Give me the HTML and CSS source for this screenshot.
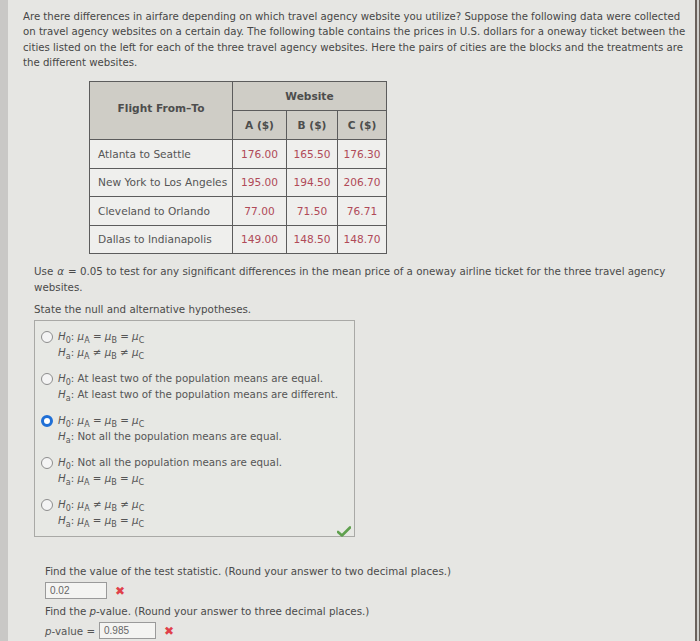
FILE: index.html
```html
<!DOCTYPE html>
<html>
<head>
<meta charset="utf-8">
<link rel="stylesheet" href="styles.css">
</head>
<body>
<div class="frame">
  <div class="page">
    <p class="intro">Are there differences in airfare depending on which travel agency website you utilize? Suppose the following data were collected on travel agency websites on a certain day. The following table contains the prices in U.S. dollars for a oneway ticket between the cities listed on the left for each of the three travel agency websites. Here the pairs of cities are the blocks and the treatments are the different websites.</p>

    <table class="data">
      <tr class="h1">
        <th rowspan="2" class="flight">Flight From–To</th>
        <th colspan="3">Website</th>
      </tr>
      <tr class="h2">
        <th class="ca">A ($)</th><th class="cb">B ($)</th><th class="cc">C ($)</th>
      </tr>
      <tr><td class="city">Atlanta to Seattle</td><td>176.00</td><td>165.50</td><td>176.30</td></tr>
      <tr><td class="city">New York to Los Angeles</td><td>195.00</td><td>194.50</td><td>206.70</td></tr>
      <tr><td class="city">Cleveland to Orlando</td><td>77.00</td><td>71.50</td><td>76.71</td></tr>
      <tr><td class="city">Dallas to Indianapolis</td><td>149.00</td><td>148.50</td><td>148.70</td></tr>
    </table>

    <div class="sub">
      <p class="use"><span class="w">Use</span><span class="alpha">α</span><span class="w">= 0.05 to test for any significant differences in the mean price of a oneway airline ticket for the three travel agency websites.</span></p>
      <p class="state">State the null and alternative hypotheses.</p>

      <div class="answers">
        <div class="opt">
          <span class="radio"></span>
          <div class="lines">
            <div><i class="m">H</i><sub>0</sub>: <i class="m">μ</i><sub>A</sub> = <i class="m">μ</i><sub>B</sub> = <i class="m">μ</i><sub>C</sub></div>
            <div><i class="m">H</i><sub>a</sub>: <i class="m">μ</i><sub>A</sub> ≠ <i class="m">μ</i><sub>B</sub> ≠ <i class="m">μ</i><sub>C</sub></div>
          </div>
        </div>
        <div class="opt">
          <span class="radio"></span>
          <div class="lines">
            <div><i class="m">H</i><sub>0</sub>: At least two of the population means are equal.</div>
            <div><i class="m">H</i><sub>a</sub>: At least two of the population means are different.</div>
          </div>
        </div>
        <div class="opt">
          <span class="radio on"></span>
          <div class="lines">
            <div><i class="m">H</i><sub>0</sub>: <i class="m">μ</i><sub>A</sub> = <i class="m">μ</i><sub>B</sub> = <i class="m">μ</i><sub>C</sub></div>
            <div><i class="m">H</i><sub>a</sub>: Not all the population means are equal.</div>
          </div>
        </div>
        <div class="opt">
          <span class="radio"></span>
          <div class="lines">
            <div><i class="m">H</i><sub>0</sub>: Not all the population means are equal.</div>
            <div><i class="m">H</i><sub>a</sub>: <i class="m">μ</i><sub>A</sub> = <i class="m">μ</i><sub>B</sub> = <i class="m">μ</i><sub>C</sub></div>
          </div>
        </div>
        <div class="opt">
          <span class="radio"></span>
          <div class="lines">
            <div><i class="m">H</i><sub>0</sub>: <i class="m">μ</i><sub>A</sub> ≠ <i class="m">μ</i><sub>B</sub> ≠ <i class="m">μ</i><sub>C</sub></div>
            <div><i class="m">H</i><sub>a</sub>: <i class="m">μ</i><sub>A</sub> = <i class="m">μ</i><sub>B</sub> = <i class="m">μ</i><sub>C</sub></div>
          </div>
        </div>
        <svg class="check" width="14" height="11" viewBox="0 0 14 11"><path d="M1 6 L5 9.5 L13 1.5" fill="none" stroke="#5fa04e" stroke-width="2.6" stroke-linecap="round" stroke-linejoin="round"/></svg>
      </div>

      <div class="lower">
        <p class="q">Find the value of the test statistic. (Round your answer to two decimal places.)</p>
        <div class="ansrow">
          <span class="box b1">0.02</span>
          <span class="x">✖</span>
        </div>

        <p class="q q2">Find the <i class="m">p</i>-value. (Round your answer to three decimal places.)</p>
        <div class="ansrow">
          <span class="lbl"><i class="m">p</i>-value =</span>
          <span class="box b2">0.985</span>
          <span class="x">✖</span>
        </div>
      </div>
    </div>
  </div>
</div>
</body>
</html>
```

FILE: styles.css
```css
html, body {
  margin: 0;
  padding: 0;
}
body {
  width: 700px;
  height: 641px;
  overflow: hidden;
  background: #d9d8d5;
  font-family: "DejaVu Sans", Verdana, sans-serif;
  color: #4a4a4a;
}
.frame {
  height: 641px;
  border-left: 8px solid #c9c8c6;
  border-right: 5px solid #6b625c;
  background: #e6e6e3;
  display: flex;
}
.page {
  flex: 1;
  padding: 9px 10px 0 15px;
  border-right: 2px solid #cfcecb;
  margin-right: 10px;
}
.intro {
  margin: 0;
  font-family: "DejaVu Sans Condensed", "DejaVu Sans", sans-serif;
  font-stretch: semi-condensed;
  font-size: 11.3px;
  line-height: 15.3px;
  color: #464646;
  width: 664px;
}
.data {
  margin: 11px 0 0 66px;
  border-collapse: collapse;
  font-size: 10.6px;
}
.data th, .data td {
  border: 1.5px solid #5c5c5c;
  padding: 0;
}
.data th {
  background: #cfcdc6;
  color: #4d4d4d;
  font-weight: bold;
  height: 28px;
}
.data th.flight {
  width: 142px;
  vertical-align: middle;
  padding-bottom: 6px;
}
.data .h2 th { height: 28px; }
.data th.ca { width: 53px; }
.data th.cb { width: 50px; }
.data th.cc { width: 48px; }
.data td {
  background: #efefed;
  height: 27.5px;
  text-align: center;
  color: #b04a58;
}
.data td.city {
  text-align: left;
  padding-left: 8px;
  color: #555;
}
.sub {
  padding-left: 11px;
}
.use {
  margin: 10px 0 0 0;
  font-size: 10.3px;
  line-height: 15.5px;
  color: #4a4a4a;
  width: 645px;
}
.alpha {
  font-style: oblique;
  margin: 0 4px;
}
.state {
  margin: 8px 0 0 0;
  font-size: 10.3px;
  color: #4a4a4a;
}
.m {
  font-family: "DejaVu Sans", sans-serif;
  font-style: oblique;
}
sub {
  font-size: 8px;
  vertical-align: -3px;
  line-height: 0;
}
.answers {
  position: relative;
  margin-top: 5px;
  width: 321px;
  height: 217px;
  border: 1px solid #a9a9a6;
  background: #e7e8e4;
  box-sizing: border-box;
  padding-top: 9px;
}
.opt {
  display: flex;
  align-items: flex-start;
  margin-left: 6px;
  margin-bottom: 12px;
}
.radio {
  width: 10px;
  height: 10px;
  border: 1px solid #8d8d8d;
  border-radius: 50%;
  background: #f4f4f4;
  margin-top: 1px;
  flex: none;
}
.radio.on {
  width: 6px;
  height: 6px;
  border: 3px solid #1f6fd6;
  background: #fff;
}
.lines {
  margin-left: 5px;
  font-size: 10.3px;
  line-height: 16px;
  color: #555;
}
.opt .lines div:first-child { line-height: 13px; }
.opt .lines div + div { margin-top: 1px; }
.check {
  position: absolute;
  right: 3px;
  bottom: -1px;
}
.lower {
  padding-left: 11px;
}
.q {
  margin: 28px 0 0 0;
  font-size: 10.3px;
  color: #4a4a4a;
}
.q2 { margin-top: 6px; }
.ansrow {
  display: flex;
  align-items: center;
  margin-top: 5px;
  height: 17px;
}
.box {
  display: inline-block;
  height: 15px;
  line-height: 15px;
  border: 1px solid #9a9a9a;
  background: #f4f4f2;
  font-family: "Liberation Sans", Arial, sans-serif;
  font-size: 10px;
  color: #666;
  padding-left: 4px;
  box-sizing: content-box;
}
.b1 { width: 56px; }
.b2 { width: 51px; margin-left: 4px; }
.x {
  color: #e0404a;
  font-size: 12px;
  margin-left: 8px;
  font-weight: bold;
}
.lbl {
  font-size: 10.3px;
  color: #555;
}
```
